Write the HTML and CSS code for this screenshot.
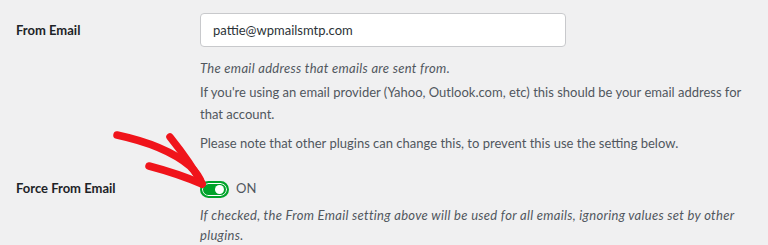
FILE: index.html
```html
<!DOCTYPE html>
<html lang="en">
<head>
    <meta charset="UTF-8">
    <title>WP Mail SMTP - From Email</title>
    <link rel="stylesheet" href="styles.css">
</head>
<body>

<div class="settings">
    <!-- From Email row -->
    <div class="setting-row">
        <div class="setting-label">From Email</div>
        <div class="setting-field">
            <input class="text-input" type="email" value="pattie@wpmailsmtp.com">
            <p class="desc desc-first">The email address that emails are sent from.</p>
            <p class="note">If you're using an email provider (Yahoo, Outlook.com, etc) this should be your email address for that account.</p>
            <p class="note note-last">Please note that other plugins can change this, to prevent this use the setting below.</p>
        </div>
    </div>

    <!-- Force From Email row -->
    <div class="setting-row row-force">
        <div class="setting-label">Force From Email</div>
        <div class="setting-field">
            <label class="toggle-line">
                <span class="toggle"><span class="knob"></span></span>
                <span class="toggle-text">ON</span>
            </label>
            <p class="desc desc-force">If checked, the From Email setting above will be used for all emails, ignoring values set by other plugins.</p>
        </div>
    </div>

    <!-- hand drawn arrow pointing at the toggle -->
    <svg class="arrow" width="768" height="245" viewBox="0 0 768 245">
        <path d="M117 135 C145 141 172 151 190 166 C196 172 200 178 202 184" fill="none" stroke="#f0141b" stroke-width="7.5" stroke-linecap="round"/>
        <path d="M170 137 C182 152 193 167 202 184" fill="none" stroke="#f0141b" stroke-width="7.5" stroke-linecap="round"/>
        <path d="M149 166 C168 171 186 177 202 184" fill="none" stroke="#f0141b" stroke-width="7.5" stroke-linecap="round"/>
    </svg>
</div>

</body>
</html>
```

FILE: styles.css
```css
/* Page base */
body {
    margin: 0;
    background-color: #f0f0f1;
    font-family: "Lato", "Noto Sans", sans-serif;
    font-size: 13px;
    color: #3c434a;
}

.settings {
    position: relative;
    padding: 13px 10px 0 16px;
    height: 232px;
    overflow: hidden;
}

/* Rows */
.setting-row {
    display: grid;
    grid-template-columns: 184px 1fr;
}

.row-force {
    margin-top: 23px;
}

.setting-label {
    font-weight: 700;
    color: #1d2327;
    line-height: 34px;
}

.row-force .setting-label {
    line-height: 22px;
}

/* Input */
.text-input {
    box-sizing: border-box;
    width: 366px;
    height: 34px;
    padding: 0 12px;
    border: 1px solid #c8c9cc;
    border-radius: 4px;
    background: #fff;
    font-family: inherit;
    font-size: 13px;
    color: #2c3338;
    margin: 0;
}

/* Descriptions */
.desc, .note {
    margin: 0;
    line-height: 22px;
    color: #50575e;
}

.desc {
    font-style: italic;
    letter-spacing: 0.3px;
}

.desc-first {
    margin-top: 10px;
}

.note {
    margin-top: 2px;
}

.note-last {
    margin-top: 7px;
}

.desc-force {
    margin-top: 6px;
    line-height: 20px;
}

/* Toggle */
.toggle-line {
    display: flex;
    align-items: center;
    gap: 7px;
    height: 22px;
}

.toggle {
    box-sizing: border-box;
    position: relative;
    width: 29px;
    height: 17px;
    border-radius: 9px;
    background: #00a32a;
    border: 2px solid #00a32a;
    box-shadow: inset 0 0 0 1px #fff;
    margin-top: 2px;
}

.knob {
    position: absolute;
    top: 2px;
    right: 3px;
    width: 9px;
    height: 9px;
    border-radius: 50%;
    background: #fff;
}

.toggle-text {
    color: #50575e;
}

/* Arrow overlay */
.arrow {
    position: absolute;
    top: 0;
    left: 0;
    pointer-events: none;
}
```
